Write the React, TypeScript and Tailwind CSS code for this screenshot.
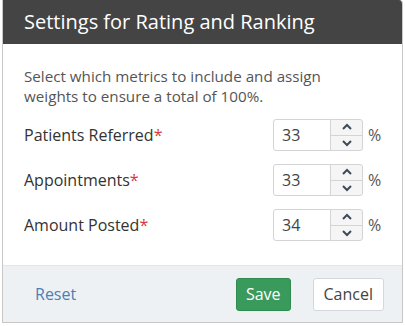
import React from "react";

function Spinner() {
  return (
    <div className="flex flex-col w-[33px] h-[32px] border border-[#d4d4d4] rounded-r-[3px] bg-[#f5f5f5] -ml-px">
      <div className="flex-1 flex items-center justify-center border-b border-[#d4d4d4]">
        <svg width="12" height="8" viewBox="0 0 12 8"><path d="M2 6 L6 2 L10 6" fill="none" stroke="#3d4a5a" strokeWidth="2" /></svg>
      </div>
      <div className="flex-1 flex items-center justify-center">
        <svg width="12" height="8" viewBox="0 0 12 8"><path d="M2 2 L6 6 L10 2" fill="none" stroke="#3d4a5a" strokeWidth="2" /></svg>
      </div>
    </div>
  );
}

function Row({ label, value }: { label: string; value: string }) {
  return (
    <div className="flex items-center h-[32px]">
      <div className="flex-1 text-[16px] text-[#333]">
        {label}
        <span className="text-[#d9363e]">*</span>
      </div>
      <div className="flex items-center">
        <div className="w-[58px] h-[32px] border border-[#d4d4d4] rounded-l-[3px] bg-white flex items-center pl-[8px] text-[16px] text-[#444]">
          {value}
        </div>
        <Spinner />
        <span className="ml-[5px] text-[16px] text-[#555] w-[14px]">%</span>
      </div>
    </div>
  );
}

export default function App() {
  return (
    <div className="w-[405px] h-[326px] bg-white" style={{ fontFamily: '"Open Sans", sans-serif' }}>
      <div className="ml-[2px] w-[401px] h-[323px] border-l border-r border-b border-[#c8c8c8] rounded-tr-[4px] flex flex-col overflow-hidden">
        <div className="h-[44px] bg-[#444444] flex items-center pl-[21px] text-white text-[20px]">
          Settings for Rating and Ranking
        </div>
        <div className="flex-1 pl-[21px] pr-[20px] pt-[22px]">
          <p className="max-w-[320px] text-[15.2px] leading-[20px] text-[#555]">
            Select which metrics to include and assign weights to ensure a total of 100%.
          </p>
          <div className="mt-[13px] flex flex-col gap-[13px]">
            <Row label="Patients Referred" value="33" />
            <Row label="Appointments" value="33" />
            <Row label="Amount Posted" value="34" />
          </div>
        </div>
        <div className="h-[57px] bg-[#eef1f4] border-t border-[#e3e7eb] flex items-center pl-[32px] pr-[18px]">
          <span className="flex-1 text-[16px] text-[#4a7fb5]">Reset</span>
          <button className="h-[33px] px-[9px] rounded-[3px] bg-[#3a9a5c] border border-[#2f8a4f] text-white text-[16px]">Save</button>
          <button className="ml-[22px] h-[33px] px-[10px] rounded-[3px] bg-white border border-[#d4d8dc] text-[#444] text-[16px]">Cancel</button>
        </div>
      </div>
    </div>
  );
}
